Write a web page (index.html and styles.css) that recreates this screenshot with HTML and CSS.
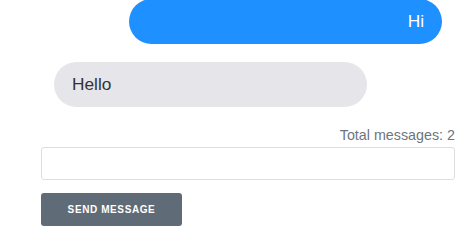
FILE: index.html
```html
<!DOCTYPE html>
<html>
<head>
<meta charset="utf-8">
<link rel="stylesheet" href="styles.css">
</head>
<body>
<div class="chat">
  <div class="messages">
    <div class="bubble sent">Hi</div>
    <div class="bubble received">Hello</div>
  </div>
  <div class="count">Total messages: 2</div>
  <input class="field" type="text">
  <button class="send">SEND MESSAGE</button>
</div>
</body>
</html>
```
FILE: styles.css
```css
html, body {
  margin: 0;
  padding: 0;
  background: #ffffff;
  font-family: "Liberation Sans", Arial, sans-serif;
}
.chat {
  width: 414px;
  margin-left: 41px;
  display: flex;
  flex-direction: column;
}
.messages {
  display: flex;
  flex-direction: column;
  gap: 18px;
  padding: 0 13px;
  margin-top: -1px;
}
.bubble {
  width: 313px;
  height: 45px;
  box-sizing: border-box;
  border-radius: 23px;
  display: flex;
  align-items: center;
  padding: 0 18px;
  font-size: 17.3px;
}
.sent {
  align-self: flex-end;
  justify-content: flex-end;
  background: #1e90ff;
  color: #ffffff;
}
.received {
  align-self: flex-start;
  background: #e5e5ea;
  color: #333333;
}
.count {
  margin-top: 20px;
  text-align: right;
  font-size: 14.3px;
  line-height: 17px;
  color: #6c757d;
}
.field {
  margin: 3px 0 0 0;
  height: 33px;
  box-sizing: border-box;
  border: 1px solid #dcdfe2;
  border-radius: 3px;
  background: #ffffff;
}
.send {
  margin-top: 13px;
  width: 141px;
  height: 33px;
  border: none;
  border-radius: 3px;
  background: #5f6b76;
  color: #ffffff;
  font-family: "Liberation Sans", Arial, sans-serif;
  font-weight: bold;
  font-size: 10px;
  letter-spacing: 0.6px;
  padding: 0;
}
```
